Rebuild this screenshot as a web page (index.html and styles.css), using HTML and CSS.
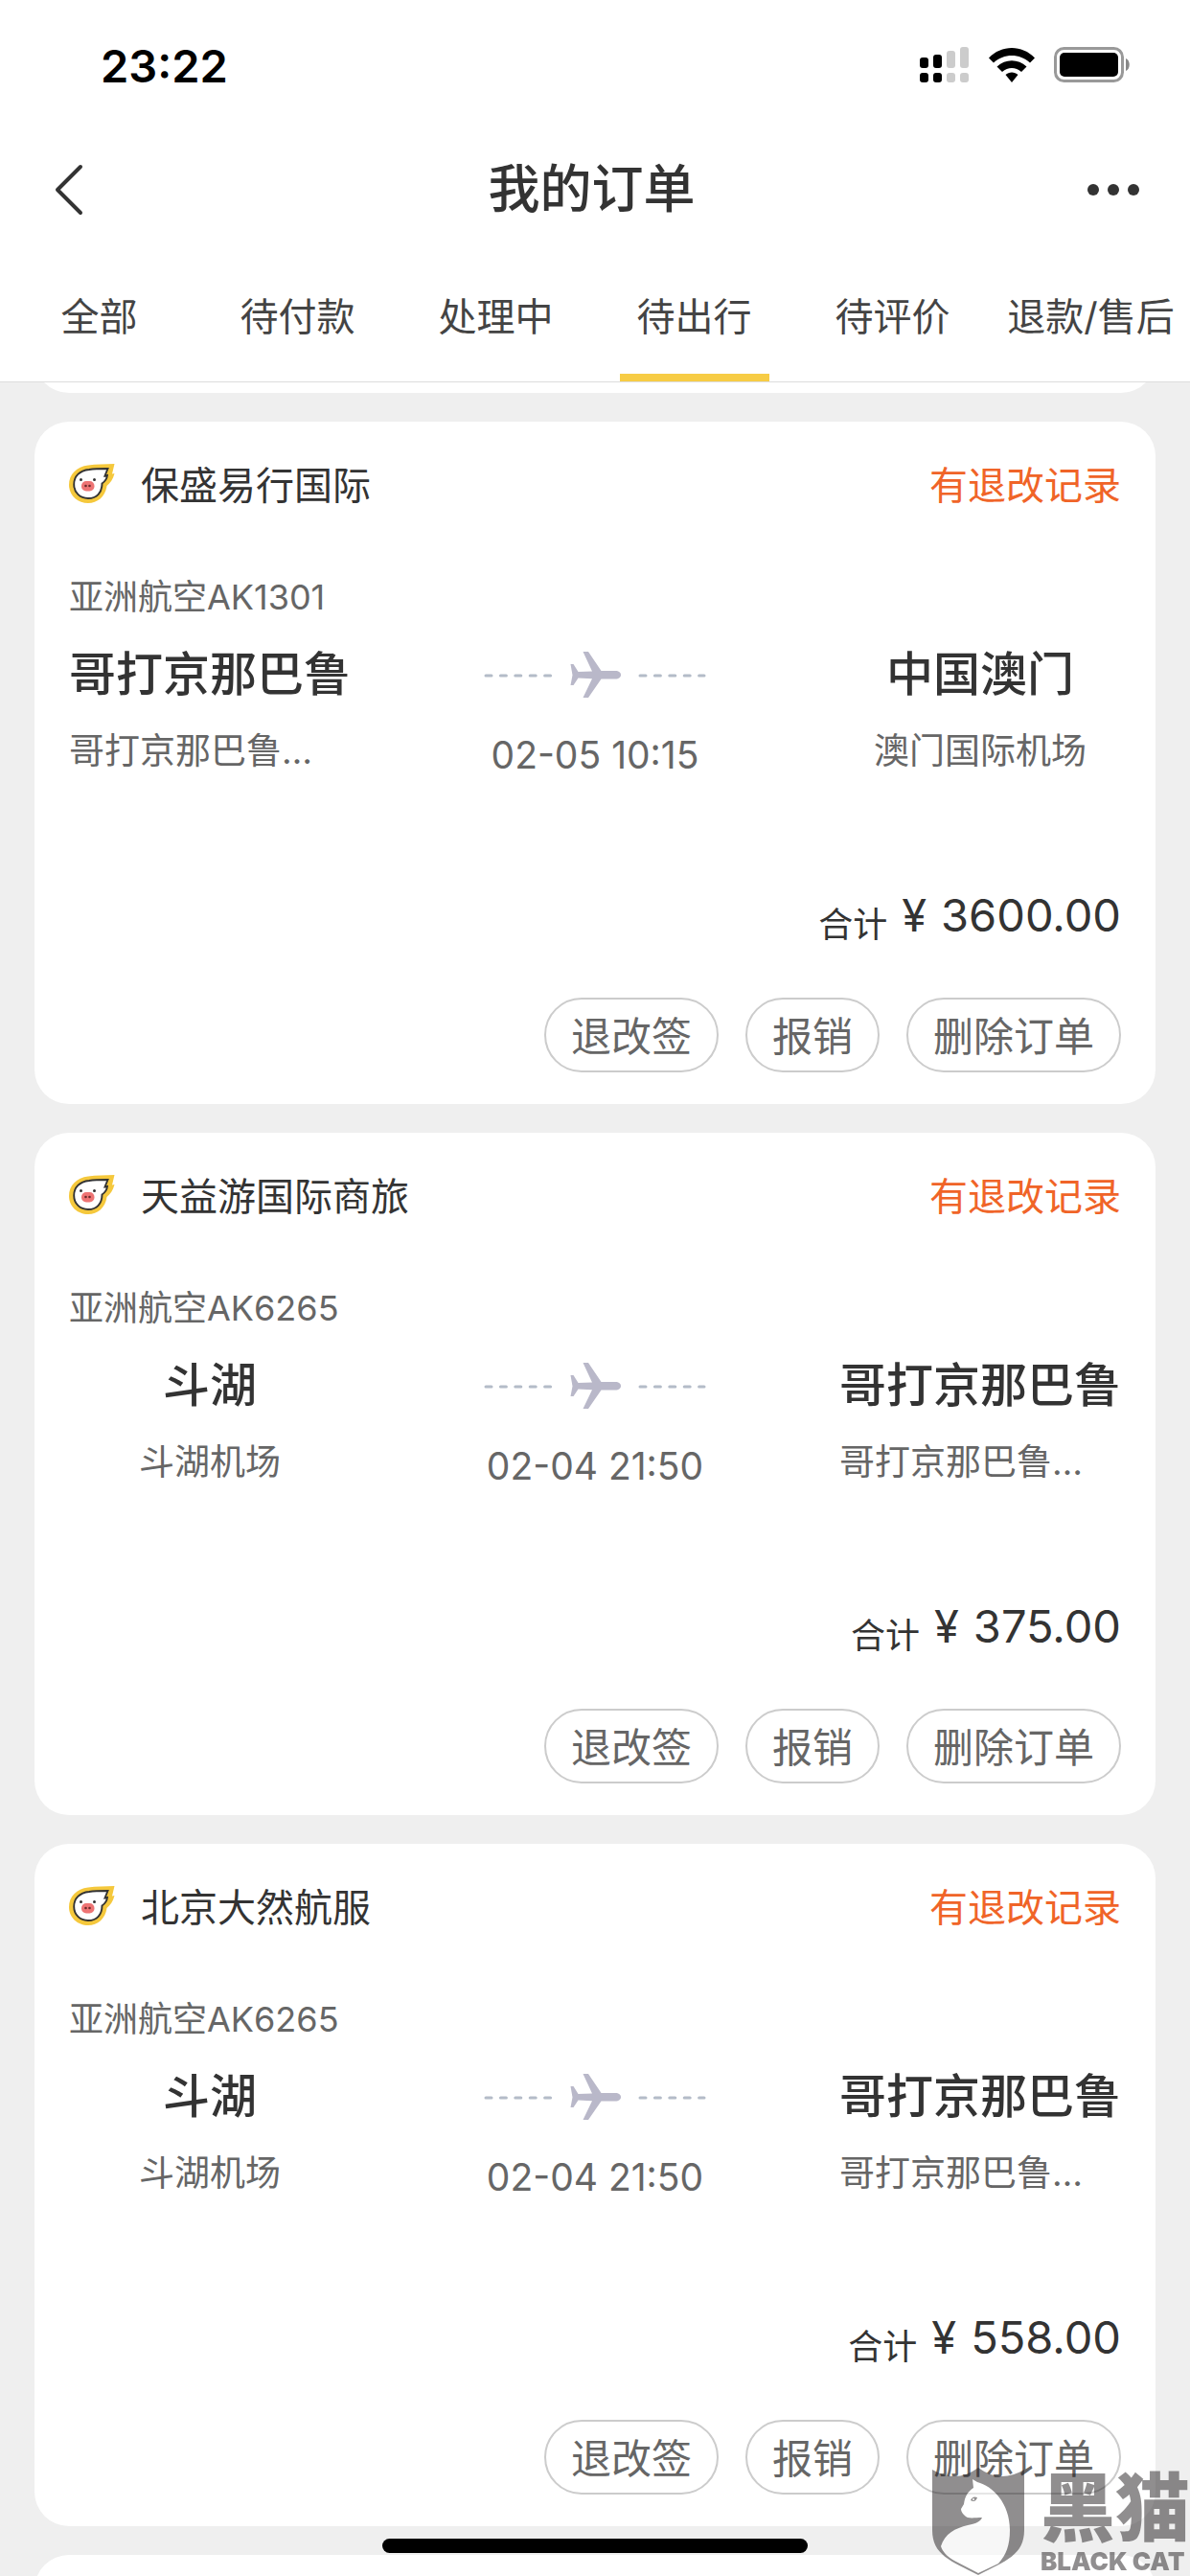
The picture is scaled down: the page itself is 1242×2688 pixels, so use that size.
FILE: index.html
```html
<!DOCTYPE html>
<html lang="zh-CN">
<head>
  <meta charset="UTF-8">
  <meta name="viewport" content="width=device-width, initial-scale=1.0">
  <title>我的订单</title>
  <link rel="stylesheet" href="styles.css">
</head>
<body>
  <!-- Shared icons -->
  <svg class="sprite" aria-hidden="true">
    <symbol id="pig" viewBox="0 0 48 42">
      <path d="M20 1.500C28 .3 38 .4 47.500 0L45 10.500L47.500 10C46 16 43 20 39.500 23C38 34 30 41 20 41C9 41 0 33 0 22C0 11 8 3 20 1.500Z" fill="#f5c83c"/>
      <path d="M21 6C27 5 34 5 40.500 5L37.500 12.500L40 12C39.500 16 37.500 18.500 34.500 20.500C34.500 30 29 36 20 36C11.500 36 5.200 30 5.200 21.500C5.200 13 11 7 21 6Z" fill="#fff" stroke="#333" stroke-width="1.900"/>
      <rect x="13" y="18" width="13.500" height="10.500" rx="5" fill="#ee7474"/>
      <circle cx="17.500" cy="23" r="1.300" fill="#6b2b2b"/>
      <circle cx="21.500" cy="23" r="1.300" fill="#6b2b2b"/>
      <circle cx="12.500" cy="16.500" r="1.500" fill="#333"/>
      <circle cx="26.500" cy="16.500" r="1.500" fill="#333"/>
    </symbol>
    <symbol id="plane" viewBox="0 0 232 48">
      <path d="M2 25H8M17.400 25H23.400M32.800 25H38.800M48.200 25H54.200M63.600 25H69.600M163 25H169M178.400 25H184.400M193.800 25H199.800M209.200 25H215.200M224.600 25H230" stroke="#b4bcc8" stroke-width="3" stroke-linecap="round"/>
      <path d="M103.500 0H109L122.500 20H137C141 20 143 22 143 24.200C143 26.500 141 28.500 137 28.500H122.500L109 48H103.500L113 28.200L98.500 27.500L93.500 35H90.500L92.500 24.500L90.500 13H93.500L98.500 21L113 20.500Z" fill="#b9b8c9"/>
    </symbol>
  </svg>

  <header class="top">
    <div class="status-bar">
      <span class="time">23:22</span>
      <div class="status-icons">
        <svg width="52" height="38" viewBox="0 0 52 38">
          <g fill="#000">
            <rect x="0" y="11" width="9" height="11" rx="3"/>
            <rect x="14" y="8" width="9" height="14" rx="3"/>
            <rect x="0" y="27" width="9" height="10" rx="3"/>
            <rect x="14" y="27" width="9" height="10" rx="3"/>
          </g>
          <g fill="#ccc">
            <rect x="28" y="4" width="9" height="18" rx="3"/>
            <rect x="42" y="0" width="9" height="22" rx="3"/>
            <rect x="28" y="27" width="9" height="10" rx="3"/>
            <rect x="42" y="27" width="9" height="10" rx="3"/>
          </g>
        </svg>
        <svg width="48" height="38" viewBox="0 0 48 38">
          <path d="M0 11.500C13-2.500 35-2.500 48 11.500L43 16.500C32.500 6.500 15.500 6.500 5 16.500Z"/>
          <path d="M8.500 20.500C17.500 12 30.500 12 39.500 20.500L34 26C28 20.500 20 20.500 14 26Z"/>
          <path d="M17.500 29C21 25.500 27 25.500 30.500 29L24 37Z"/>
        </svg>
        <svg width="80" height="38" viewBox="0 0 80 38">
          <rect x="1.500" y="1.500" width="70" height="34" rx="9" fill="none" stroke="#999" stroke-width="3"/>
          <rect x="6" y="6" width="61" height="25" rx="5"/>
          <path d="M75 12C80 14 80 23 75 25Z" fill="#888"/>
        </svg>
      </div>
    </div>

    <div class="nav-bar">
      <button class="nav-btn back" type="button" aria-label="返回">
        <svg width="30" height="54" viewBox="0 0 30 54">
          <path d="M27 3L3 27L27 51" fill="none" stroke="#333" stroke-width="4" stroke-linecap="round" stroke-linejoin="round"/>
        </svg>
      </button>
      <h1>我的订单</h1>
      <button class="nav-btn" type="button" aria-label="更多">
        <svg width="56" height="14" viewBox="0 0 56 14" fill="#333">
          <circle cx="7" cy="7" r="6"/>
          <circle cx="28" cy="7" r="6"/>
          <circle cx="49" cy="7" r="6"/>
        </svg>
      </button>
    </div>

    <nav class="tabs">
      <a href="#">全部</a>
      <a href="#">待付款</a>
      <a href="#">处理中</a>
      <a href="#" class="active">待出行</a>
      <a href="#">待评价</a>
      <a href="#">退款/售后</a>
    </nav>
  </header>

  <main class="orders">
    <div class="card card-prev"></div>

    <article class="card">
      <div class="card-head">
        <svg class="logo"><use href="#pig"/></svg>
        <h2>保盛易行国际</h2>
        <span class="state">有退改记录</span>
      </div>
      <p class="flight">亚洲航空AK1301</p>
      <div class="route">
        <div class="place">
          <strong>哥打京那巴鲁</strong>
          <span class="airport cut">哥打京那巴鲁…</span>
        </div>
        <div class="trip">
          <svg class="plane"><use href="#plane"/></svg>
          <time>02-05 10:15</time>
        </div>
        <div class="place">
          <strong>中国澳门</strong>
          <span class="airport">澳门国际机场</span>
        </div>
      </div>
      <div class="total"><span>合计</span><b>¥</b><b>3600.00</b></div>
      <div class="actions">
        <button type="button">退改签</button>
        <button type="button">报销</button>
        <button type="button">删除订单</button>
      </div>
    </article>

    <article class="card">
      <div class="card-head">
        <svg class="logo"><use href="#pig"/></svg>
        <h2>天益游国际商旅</h2>
        <span class="state">有退改记录</span>
      </div>
      <p class="flight">亚洲航空AK6265</p>
      <div class="route">
        <div class="place">
          <strong>斗湖</strong>
          <span class="airport">斗湖机场</span>
        </div>
        <div class="trip">
          <svg class="plane"><use href="#plane"/></svg>
          <time>02-04 21:50</time>
        </div>
        <div class="place">
          <strong>哥打京那巴鲁</strong>
          <span class="airport cut">哥打京那巴鲁…</span>
        </div>
      </div>
      <div class="total"><span>合计</span><b>¥</b><b>375.00</b></div>
      <div class="actions">
        <button type="button">退改签</button>
        <button type="button">报销</button>
        <button type="button">删除订单</button>
      </div>
    </article>

    <article class="card">
      <div class="card-head">
        <svg class="logo"><use href="#pig"/></svg>
        <h2>北京大然航服</h2>
        <span class="state">有退改记录</span>
      </div>
      <p class="flight">亚洲航空AK6265</p>
      <div class="route">
        <div class="place">
          <strong>斗湖</strong>
          <span class="airport">斗湖机场</span>
        </div>
        <div class="trip">
          <svg class="plane"><use href="#plane"/></svg>
          <time>02-04 21:50</time>
        </div>
        <div class="place">
          <strong>哥打京那巴鲁</strong>
          <span class="airport cut">哥打京那巴鲁…</span>
        </div>
      </div>
      <div class="total"><span>合计</span><b>¥</b><b>558.00</b></div>
      <div class="actions">
        <button type="button">退改签</button>
        <button type="button">报销</button>
        <button type="button">删除订单</button>
      </div>
    </article>

    <div class="card card-next"></div>
  </main>

  <!-- Watermark over the page -->
  <div class="watermark">
    <svg width="98" height="114" viewBox="0 0 98 114">
      <path d="M1 3Q26 18 49 1Q72 18 97 3V66C97 92 78 98 49 113C20 98 1 92 1 66Z" fill="#231f20"/>
      <path d="M43 13L48 16C64 20 82 38 82 66C82 82 78 92 70 101L49 111L24 98C16 93 12 89 10 83C14 70 25 64 38 61C48 59 51 57 53 53C47 53 42 54 38 53C34 51 31 47 31 44L34 39C35 31 38 26 44 22Z" fill="#fff"/>
      <path d="M41 35Q43 30 48 32Q46 38 41 35Z" fill="#231f20"/>
      <circle cx="44" cy="34" r="1" fill="#fff"/>
    </svg>
    <div class="watermark-text">
      <span class="wm-cn">黑猫</span>
      <span class="wm-en">BLACK CAT</span>
    </div>
  </div>
  <div class="home-bar"></div>
</body>
</html>
```
FILE: styles.css
```css
* {
  box-sizing: border-box;
}

body {
  margin: 0;
  height: 100vh;
  display: flex;
  flex-direction: column;
  overflow: hidden;
  background: #efefef;
  color: #333;
  font-family: Inter, "Noto Sans CJK SC", sans-serif;
  font-size: 36px;
}

h1, h2, p {
  margin: 0;
}

button {
  font-family: inherit;
  background: none;
  color: inherit;
  cursor: pointer;
}

.sprite {
  display: none;
}

/* Top area */
.top {
  flex: none;
  background: #fff;
  border-bottom: 1px solid #ddd;
}

.status-bar {
  display: flex;
  justify-content: space-between;
  align-items: center;
  height: 136px;
  padding: 0 62px 0 105px;
  color: #000;
}

.time {
  font-size: 47px;
  font-weight: 600;
}

.status-icons {
  display: flex;
  gap: 20px;
}

.nav-bar {
  display: flex;
  justify-content: space-between;
  align-items: center;
  height: 124px;
  padding: 0 52px 0 57px;
}

.nav-btn {
  display: flex;
  align-items: center;
  width: 56px;
  height: 56px;
  padding: 0;
  border: 0;
}

.back {
  width: 44px;
}

h1 {
  font-size: 54px;
  font-weight: 500;
  line-height: 80px;
}

.tabs {
  display: flex;
  height: 138px;
}

.tabs a {
  position: relative;
  flex: 1 0 0;
  color: #444;
  font-size: 40px;
  line-height: 142px;
  text-align: center;
  text-decoration: none;
  white-space: nowrap;
}

.tabs .active::after {
  content: "";
  position: absolute;
  bottom: 0;
  left: 50%;
  width: 156px;
  height: 8px;
  margin-left: -78px;
  background: #f7cc45;
}

/* Order list */
.orders {
  flex: 1;
  min-height: 0;
  overflow: hidden;
}

.card {
  margin: 0 36px 30px;
  padding: 0 36px 33px;
  border-radius: 36px;
  background: #fff;
}

/* Scrolled mostly under the tabs */
.card-prev {
  height: 80px;
  margin-top: -69px;
}

.card-next {
  height: 80px;
}

.card-head {
  display: flex;
  align-items: center;
  height: 130px;
}

.logo {
  width: 48px;
  height: 42px;
  margin-right: 27px;
}

h2,
.state {
  padding-bottom: 3px;
  font-size: 40px;
  font-weight: 400;
}

h2 {
  flex: 1;
}

.state {
  color: #f06428;
}

.flight {
  margin: 28px 0 24px;
  color: #666;
  line-height: 50px;
}

.route {
  display: flex;
  justify-content: space-between;
}

.place,
.trip {
  display: flex;
  flex-direction: column;
  align-items: center;
  gap: 24px;
}

.place {
  width: 294px;
}

.place strong {
  font-size: 49px;
  font-weight: 500;
  line-height: 64px;
  white-space: nowrap;
}

.airport {
  color: #666;
  font-size: 37px;
  line-height: 48px;
}

.cut {
  align-self: flex-start;
}

.plane {
  width: 232px;
  height: 48px;
  margin: 8px 0;
}

.trip time {
  color: #666;
  font-size: 39px;
  line-height: 56px;
}

.total {
  display: flex;
  justify-content: flex-end;
  align-items: flex-end;
  margin-top: 109px;
  line-height: 40px;
}

.total b {
  margin-left: 15px;
  font-size: 47px;
  font-weight: 400;
  line-height: 60px;
}

.actions {
  display: flex;
  justify-content: flex-end;
  gap: 28px;
  margin-top: 56px;
}

.actions button {
  height: 78px;
  padding: 0 26px 4px;
  border: 2px solid #ccc;
  border-radius: 39px;
  color: #666;
  font-size: 42px;
}

/* Overlays */
.watermark {
  position: fixed;
  right: 0;
  bottom: 0;
  display: flex;
  gap: 16px;
  opacity: 0.5;
  color: #231f20;
}

.watermark-text {
  display: flex;
  flex-direction: column;
}

.wm-cn {
  font-size: 78px;
  font-weight: 900;
  line-height: 88px;
}

.wm-en {
  font-size: 26px;
  font-weight: 900;
  line-height: 22px;
}

.home-bar {
  position: fixed;
  bottom: 24px;
  left: 50%;
  width: 444px;
  height: 15px;
  margin-left: -222px;
  border-radius: 8px;
  background: #000;
}
```
